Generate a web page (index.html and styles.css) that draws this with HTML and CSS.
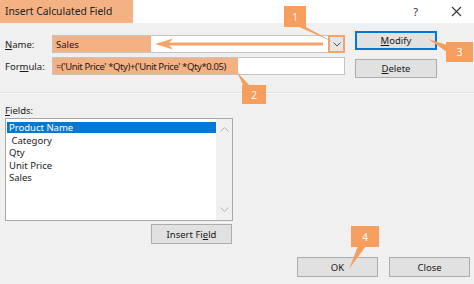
FILE: index.html
```html
<!DOCTYPE html>
<html>
<head>
<meta charset="utf-8">
<link rel="stylesheet" href="styles.css">
</head>
<body>
<div class="dialog">
  <div class="titlebar">
    <div class="title-tag">Insert Calculated Field</div>
    <div class="title-ctrls">
      <span class="help">?</span>
      <svg class="close-x" width="11" height="11" viewBox="0 0 11 11"><path d="M1 1 L10 10 M10 1 L1 10" stroke="#333" stroke-width="1.1" fill="none"/></svg>
    </div>
  </div>
  <div class="main">
    <div class="top">
      <div class="form">
        <div class="row">
          <label class="lbl"><u>N</u>ame:</label>
          <div class="input name-input">
            <span class="hl name-hl">Sales</span>
            <span class="fill"></span>
            <span class="dd">
              <svg width="8" height="5" viewBox="0 0 8 5"><path d="M0.5 0.5 L4 4 L7.5 0.5" stroke="#555" stroke-width="1" fill="none"/></svg>
            </span>
          </div>
        </div>
        <div class="row">
          <label class="lbl">For<u>m</u>ula:</label>
          <div class="input formula-input">
            <span class="hl formula-hl">=('Unit Price' *Qty)+('Unit Price' *Qty*0.05)</span>
          </div>
        </div>
      </div>
      <div class="side">
        <button class="btn focused"><u>M</u>odify</button>
        <button class="btn del"><u>D</u>elete</button>
      </div>
    </div>
    <div class="sep"></div>
    <div class="fields-lbl"><u>F</u>ields:</div>
    <div class="listbox">
      <div class="items">
        <div class="item sel">Product Name</div>
        <div class="item">&nbsp;Category</div>
        <div class="item">Qty</div>
        <div class="item">Unit Price</div>
        <div class="item">Sales</div>
      </div>
      <div class="scroll">
        <svg width="9" height="5" viewBox="0 0 9 5"><path d="M0.5 4.5 L4.5 0.5 L8.5 4.5" stroke="#b5b5b5" stroke-width="1" fill="none"/></svg>
        <svg width="9" height="5" viewBox="0 0 9 5"><path d="M0.5 0.5 L4.5 4.5 L8.5 0.5" stroke="#b5b5b5" stroke-width="1" fill="none"/></svg>
      </div>
    </div>
    <div class="insert-row">
      <button class="btn">Insert Fi<u>e</u>ld</button>
    </div>
    <div class="bottom-row">
      <button class="btn">OK</button>
      <button class="btn">Close</button>
    </div>
  </div>

  <svg class="overlay" width="474" height="284" viewBox="0 0 474 284">
    <g fill="#f59e5e">
      <polygon points="297,26 304,26 333,42"/>
      <polygon points="244,87 251,87 237,72"/>
      <polygon points="447,45 447,52 428,39"/>
      <polygon points="358,246 366,246 349,269"/>
    </g>
    <line x1="168" y1="44" x2="323" y2="44" stroke="#f3a36c" stroke-width="3"/>
    <polygon points="155,44 173,38.5 168,44 173,49.5" fill="#f3a36c"/>
  </svg>
  <div class="num n1">1</div>
  <div class="num n2">2</div>
  <div class="num n3">3</div>
  <div class="num n4">4</div>
</div>
</body>
</html>
```
FILE: styles.css
```css
* { box-sizing: border-box; }
html, body { margin: 0; padding: 0; }
body {
  width: 474px;
  height: 284px;
  overflow: hidden;
  font-family: "Noto Sans", "Open Sans", sans-serif;
  font-size: 9.5px;
  color: #1a1a1a;
}
.dialog {
  position: relative;
  width: 474px;
  height: 284px;
}
.titlebar {
  height: 23px;
  background: #ffffff;
  display: flex;
  align-items: center;
  justify-content: space-between;
}
.title-tag {
  width: 133px;
  height: 23px;
  background: #f4b183;
  padding-left: 5px;
  line-height: 23px;
  font-size: 10.3px;
  color: #222;
}
.title-ctrls {
  display: flex;
  align-items: center;
  gap: 33px;
  padding-right: 12px;
}
.help { font-size: 11px; color: #333; }
.close-x { display: block; }
.main {
  height: 261px;
  background: #f0f0f0;
  padding-top: 8px;
}
.top {
  display: flex;
  align-items: flex-start;
}
.form {
  margin-left: 5px;
  width: 340px;
  padding-top: 4px;
  display: flex;
  flex-direction: column;
  gap: 4px;
}
.row {
  display: flex;
  align-items: center;
  height: 18px;
}
.lbl {
  width: 47px;
}
.input {
  width: 293px;
  height: 18px;
  background: #ffffff;
  border: 1px solid #c4c4c4;
  display: flex;
  align-items: stretch;
}
.hl {
  background: #f4b183;
  display: flex;
  align-items: center;
  padding-left: 3px;
  white-space: nowrap;
}
.name-hl { width: 98px; }
.fill { flex: 1; }
.dd {
  width: 17px;
  border: 2px solid #f2a36d;
  background: #e6e6e6;
  display: flex;
  align-items: center;
  justify-content: center;
  margin: -1px -1px -1px 0;
}
.formula-hl { width: 185px; padding-left: 3px; letter-spacing: -0.4px; }
.side {
  margin-left: 10px;
  display: flex;
  flex-direction: column;
  gap: 9px;
}
.btn {
  width: 82px;
  height: 20px;
  background: #e1e1e1;
  border: 1px solid #adadad;
  font-family: "Noto Sans", "Open Sans", sans-serif;
  font-size: 9.5px;
  color: #1a1a1a;
  padding: 0;
  margin: 0;
}
.side .btn { height: 19px; }
.btn.focused { border: 2px solid #0078d7; }
.sep {
  margin-top: 14px;
  height: 2px;
  border-top: 1px solid #e2e2e2;
  border-bottom: 1px solid #f9f9f9;
}
.fields-lbl {
  margin-top: 10px;
  margin-left: 5px;
  height: 14px;
  line-height: 14px;
}
.listbox {
  margin-left: 5px;
  width: 228px;
  height: 103px;
  background: #ffffff;
  border: 1px solid #a8a8a8;
  display: flex;
}
.items {
  flex: 1;
  padding: 3px 0 0 1px;
}
.item {
  height: 12.5px;
  line-height: 12px;
  padding-left: 2px;
  white-space: pre;
}
.item.sel {
  background: #0078d7;
  color: #ffffff;
  height: 11px;
  line-height: 11px;
  margin-bottom: 1.5px;
}
.scroll {
  width: 16px;
  background: #f0f0f0;
  display: flex;
  flex-direction: column;
  align-items: center;
  justify-content: space-between;
  padding: 8px 0 8px;
}
.scroll svg { display: block; }
.insert-row {
  margin-top: 3px;
  padding-left: 151px;
}
.insert-row .btn { width: 81px; }
.bottom-row {
  margin-top: 13px;
  padding-left: 297px;
  display: flex;
  gap: 11px;
}
.bottom-row .btn { width: 81px; }
.overlay {
  position: absolute;
  left: 0;
  top: 0;
  pointer-events: none;
}
.num {
  position: absolute;
  background: #f59e5e;
  color: #ffffff;
  font-size: 10px;
  display: flex;
  align-items: center;
  justify-content: center;
}
.n1 { left: 284px; top: 6px; width: 22px; height: 21px; }
.n2 { left: 242px; top: 85px; width: 24px; height: 19px; }
.n3 { left: 446px; top: 42px; width: 27px; height: 20px; }
.n4 { left: 351px; top: 226px; width: 28px; height: 21px; }
```
